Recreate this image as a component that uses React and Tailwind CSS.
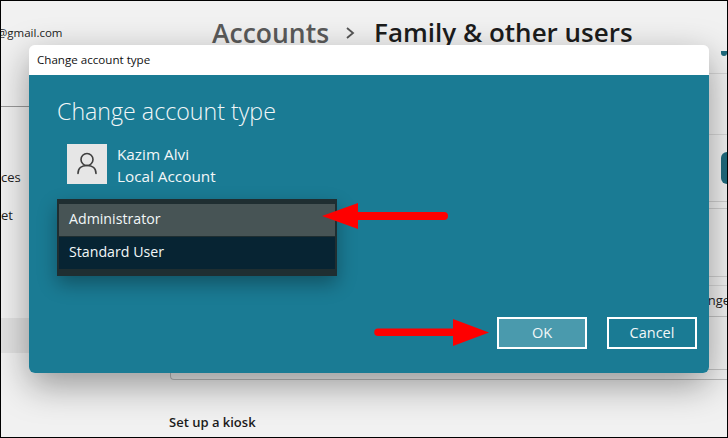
const uiFont = "font-['Open_Sans','Noto_Sans',sans-serif]";

function PersonIcon() {
  return (
    <svg width="40" height="40" viewBox="0 0 40 40" fill="none" stroke="#3f3f3f" strokeWidth="1.6" strokeLinecap="round">
      <circle cx="20" cy="15.5" r="6" />
      <path d="M11 29.5c0-5.5 4-8 9-8s9 2.500 9 8" />
    </svg>
  );
}

function ArrowLeft() {
  return (
    <svg className="absolute left-[293px] top-[128px]" width="126" height="30" viewBox="0 0 126 30">
      <path d="M0 13 L36 0 V9 H122 a4 4 0 0 1 0 8 H36 V26 Z" fill="#fe0000" />
    </svg>
  );
}

function ArrowRight() {
  return (
    <svg className="absolute left-[345px] top-[243px]" width="116" height="30" viewBox="0 0 116 30">
      <path d="M115 14.500 L79 1 V10.500 H4 a3.500 3.500 0 0 0 0 7.500 H79 V28 Z" fill="#fe0000" />
    </svg>
  );
}

function Dialog() {
  return (
    <div className="absolute left-[28px] top-[44px] w-[680px] h-[328px] rounded-md overflow-visible shadow-[0_12px_36px_rgba(0,0,0,0.38)] flex flex-col">
      <div className="h-[30px] bg-white rounded-t-md flex items-center pl-[8px] text-[11.6px] text-[#111]">
        Change account type
      </div>
      <div className="relative flex-1 bg-[#1a7b94] rounded-b-md text-[#f2f7f8] pl-[28px] pr-[12px] flex flex-col">
        <h2 className="mt-[20px] text-[23.2px] leading-[32px] font-light">Change account type</h2>
        <div className="mt-[17px] ml-[10px] flex gap-[10px]">
          <div className="w-[40px] h-[40px] bg-[#e6e6e6]">
            <PersonIcon />
          </div>
          <div className="text-[15.3px] leading-[22px] -mt-[1px]">
            <div>Kazim Alvi</div>
            <div>Local Account</div>
          </div>
        </div>
        <div className="mt-[12px] w-[280px] h-[77px] bg-[#1f2e31] border-l-2 border-r-2 border-[#1f2e31] pt-[5px] shadow-[0_8px_18px_rgba(0,0,0,0.32)] text-[14.2px]">
          <div className="h-[32px] bg-[#475455] flex items-center pl-[10px] pb-[2px]">Administrator</div>
          <div className="mt-[1px] h-[32px] bg-[#072433] flex items-center pl-[10px] pb-[2px]">Standard User</div>
        </div>
        <div className="mt-[41px] self-end flex gap-[20px] text-[14.5px]">
          <button className="w-[90px] h-[32px] border-[2px] border-white bg-[#4a9aad]">OK</button>
          <button className="w-[90px] h-[32px] border-[2px] border-white">Cancel</button>
        </div>
        <ArrowLeft />
        <ArrowRight />
      </div>
    </div>
  );
}

export default function App() {
  return (
    <div className={`relative w-[728px] h-[438px] overflow-hidden border border-black bg-[#f1f1f1] flex ${uiFont}`}>
      {/* sidebar behind the dialog */}
      <aside className="w-[169px] shrink-0 flex flex-col text-[13px] text-[#222]">
        <div className="mt-[23px] -ml-[4px] text-[11.5px] leading-[18px] whitespace-nowrap">@gmail.com</div>
        <div className="mt-[23px] h-[42px] border-b border-[#9a9a9a]" />
        <div className="mt-[61px] leading-[18px] pl-0">ces</div>
        <div className="mt-[20px] leading-[18px]">et</div>
        <div className="mt-[94px] h-[35px] bg-[#e2e2e2]" />
      </aside>

      <main className="flex-1 min-w-0 flex flex-col">
        <header className="h-[44px] pl-[42px] flex items-center gap-[16px] font-semibold whitespace-nowrap pt-[20px]">
          <span className="text-[26.5px] leading-[36px] text-[#5a5a5a]">Accounts</span>
          <svg width="10" height="14" viewBox="0 0 10 14" fill="none" stroke="#555" strokeWidth="1.8">
            <path d="M2 2l6 5-6 5" />
          </svg>
          <span className="text-[26px] leading-[36px] -mt-[2px] text-[#1c1c1c] ml-[3px]">Family &amp; other users</span>
        </header>
        <div className="h-[29px] border-b border-[#d8d8d8] flex justify-end">
          <div className="w-[6px] h-[5px] mt-[6px] bg-[#1f6a7d] rounded-b-sm" />
        </div>
        <div className="h-[61px] border-b border-[#d8d8d8] flex justify-end items-end">
          <div className="w-[6px] h-[32px] -mb-[32px] relative top-[18px] bg-[#1f6a7d] rounded-l-md" />
        </div>
        <div className="h-[67px] border-b border-[#d0d0d0]" />
        <div className="h-[7px] border-b border-[#d0d0d0]" />
        <div className="h-[68px] border-b border-[#d0d0d0]" />
        <div className="h-[9px] border-b border-[#d8d8d8]" />
        <div className="h-[31px] border-b border-[#c4c4c4] flex justify-end items-center text-[13px] text-[#222] overflow-hidden">
          <span className="-mr-[3px]">Change</span>
        </div>
        <div className="h-[53px] border-b border-[#c4c4c4]" />
        <div className="h-[10px] border-b border-l border-[#bdbdbd] rounded-bl-sm" />
        <div className="mt-[33px] -ml-[1px] text-[13px] leading-[18px] font-semibold text-[#1c1c1c]">Set up a kiosk</div>
      </main>

      <Dialog />
    </div>
  );
}
